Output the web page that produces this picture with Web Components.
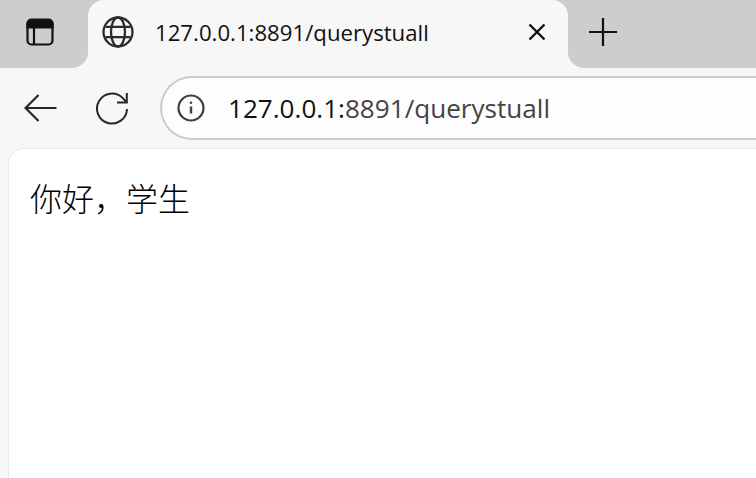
<!DOCTYPE html>
<html lang="zh">
<head>
<meta charset="utf-8">
<title>querystuall</title>
<style>
  html, body { margin: 0; height: 100%; overflow: hidden; background: #f7f7f7; }
</style>
</head>
<body>
<browser-window>
  <browser-tabstrip title-text="127.0.0.1:8891/querystuall"></browser-tabstrip>
  <browser-toolbar host-part="127.0.0.1:" path-part="8891/querystuall"></browser-toolbar>
  <page-view>你好，学生</page-view>
</browser-window>

<script>
const UI_FONT = '"Open Sans", "Noto Sans", sans-serif';

class BrowserWindow extends HTMLElement {
  constructor() {
    super();
    this._shadowDOM = this.attachShadow({ mode: 'open' });
    this._shadowDOM.innerHTML = `
    <style>
      :host {
        display: flex;
        flex-direction: column;
        height: 478px;
        background: #f7f7f7;
      }
    </style>
    <slot></slot>`;
  }
}

class BrowserTabstrip extends HTMLElement {
  constructor() {
    super();
    this._shadowDOM = this.attachShadow({ mode: 'open' });
  }

  connectedCallback() {
    this._shadowDOM.innerHTML = `
    <style>
      :host {
        display: flex;
        height: 68px;
        flex: none;
        background: #cdcdcd;
        font-family: ${UI_FONT};
      }
      .corner {
        width: 88px;
        background: #f7f7f7;
      }
      .side {
        height: 100%;
        display: flex;
        align-items: center;
        justify-content: center;
        padding: 0 8px 4px 0;
        box-sizing: border-box;
        background: #cdcdcd;
        border-bottom-right-radius: 16px;
      }
      .tab {
        width: 480px;
        display: flex;
        align-items: center;
        box-sizing: border-box;
        padding: 0 22px 4px 14px;
        background: #f7f7f7;
        border-radius: 16px 16px 0 0;
        color: #111;
        font-size: 22.200px;
      }
      .tab span {
        flex: 1;
        margin-left: 21px;
        white-space: nowrap;
      }
      .rest {
        flex: 1;
        background: #f7f7f7;
      }
      .rest-inner {
        height: 100%;
        display: flex;
        align-items: center;
        padding-left: 21px;
        padding-bottom: 4px;
        box-sizing: border-box;
        background: #cdcdcd;
        border-bottom-left-radius: 16px;
      }
      svg { display: block; flex: none; }
    </style>
    <div class="corner"><div class="side">
      <svg width="28" height="28" viewBox="0 0 28 28" fill="none" stroke="#111" stroke-width="2.200">
        <rect x="1.500" y="1.500" width="25" height="25" rx="4"/>
        <path d="M1.500 6a4 4 0 0 1 4-4h17a4 4 0 0 1 4 4v3.500h-25z" fill="#111"/>
        <path d="M8 9.500v17"/>
      </svg>
    </div></div>
    <div class="tab">
      <svg width="32" height="32" viewBox="0 0 32 32" fill="none" stroke="#2b2b2b" stroke-width="2.300">
        <circle cx="16" cy="16" r="14.500"/>
        <ellipse cx="16" cy="16" rx="7" ry="14.500"/>
        <path d="M3.400 10.800h25.200M3.400 21.200h25.200"/>
      </svg>
      <span>${this.getAttribute('title-text')}</span>
      <svg width="18" height="18" viewBox="0 0 18 18" fill="none" stroke="#111" stroke-width="2.400">
        <path d="M1.500 1.500l15 15M16.500 1.500l-15 15"/>
      </svg>
    </div>
    <div class="rest"><div class="rest-inner">
      <svg width="28" height="28" viewBox="0 0 28 28" fill="none" stroke="#111" stroke-width="2.200">
        <path d="M14 0v28M0 14h28"/>
      </svg>
    </div></div>`;
  }
}

class AddressBar extends HTMLElement {
  constructor() {
    super();
    this._shadowDOM = this.attachShadow({ mode: 'open' });
  }

  connectedCallback() {
    this._shadowDOM.innerHTML = `
    <style>
      :host {
        display: flex;
        flex: 1;
        align-items: center;
        height: 64px;
        box-sizing: border-box;
        padding-left: 15px;
        background: #fdfdfd;
        border: 2px solid #cbcbcb;
        border-right: none;
        border-radius: 32px 0 0 32px;
        font-family: ${UI_FONT};
        font-size: 26.100px;
        color: #444;
      }
      svg { display: block; flex: none; }
      .url { margin-left: 23px; white-space: nowrap; }
      .host { color: #111; }
    </style>
    <svg width="28" height="28" viewBox="0 0 28 28" fill="none" stroke="#3f3f3f" stroke-width="2.200">
      <circle cx="14" cy="14" r="12.500"/>
      <path d="M14 12.500v7" stroke-width="2.400"/>
      <circle cx="14" cy="8.800" r="1.300" fill="#3f3f3f" stroke="none"/>
    </svg>
    <div class="url"><span class="host">${this.getAttribute('host-part')}</span>${this.getAttribute('path-part')}</div>`;
  }
}

class BrowserToolbar extends HTMLElement {
  constructor() {
    super();
    this._shadowDOM = this.attachShadow({ mode: 'open' });
  }

  connectedCallback() {
    this._shadowDOM.innerHTML = `
    <style>
      :host {
        display: flex;
        align-items: center;
        flex: none;
        height: 80px;
        box-sizing: border-box;
        padding: 0 0 0 24px;
        background: #f7f7f7;
      }
      svg { display: block; flex: none; }
      .reload { margin-left: 39px; margin-right: 31px; }
    </style>
    <svg width="33" height="28" viewBox="0 0 33 28" fill="none" stroke="#262626" stroke-width="2.200">
      <path d="M1.500 14h31M14.500 1l-13 13 13 13"/>
    </svg>
    <svg class="reload" width="33" height="33" viewBox="0 0 33 33" fill="none" stroke="#262626" stroke-width="2">
      <path d="M31 17A15 15 0 1 1 26.600 5.900l4.200 4.600"/>
      <path d="M30.800 1v9.500h-9.800"/>
    </svg>
    <address-bar host-part="${this.getAttribute('host-part')}" path-part="${this.getAttribute('path-part')}"></address-bar>`;
  }
}

class PageView extends HTMLElement {
  constructor() {
    super();
    this._shadowDOM = this.attachShadow({ mode: 'open' });
    this._shadowDOM.innerHTML = `
    <style>
      :host {
        display: block;
        flex: 1;
        margin-left: 8px;
        padding: 28px 21px;
        background: #fff;
        border: 1px solid #e9e9e9;
        border-width: 1px 0 0 1px;
        border-radius: 16px 0 0 0;
        color: #000;
        font-family: "Noto Sans CJK SC", sans-serif;
        font-weight: 300;
        font-size: 32px;
        line-height: 40px;
      }
    </style>
    <slot></slot>`;
  }
}

customElements.define('browser-window', BrowserWindow);
customElements.define('browser-tabstrip', BrowserTabstrip);
customElements.define('address-bar', AddressBar);
customElements.define('browser-toolbar', BrowserToolbar);
customElements.define('page-view', PageView);
</script>
</body>
</html>
